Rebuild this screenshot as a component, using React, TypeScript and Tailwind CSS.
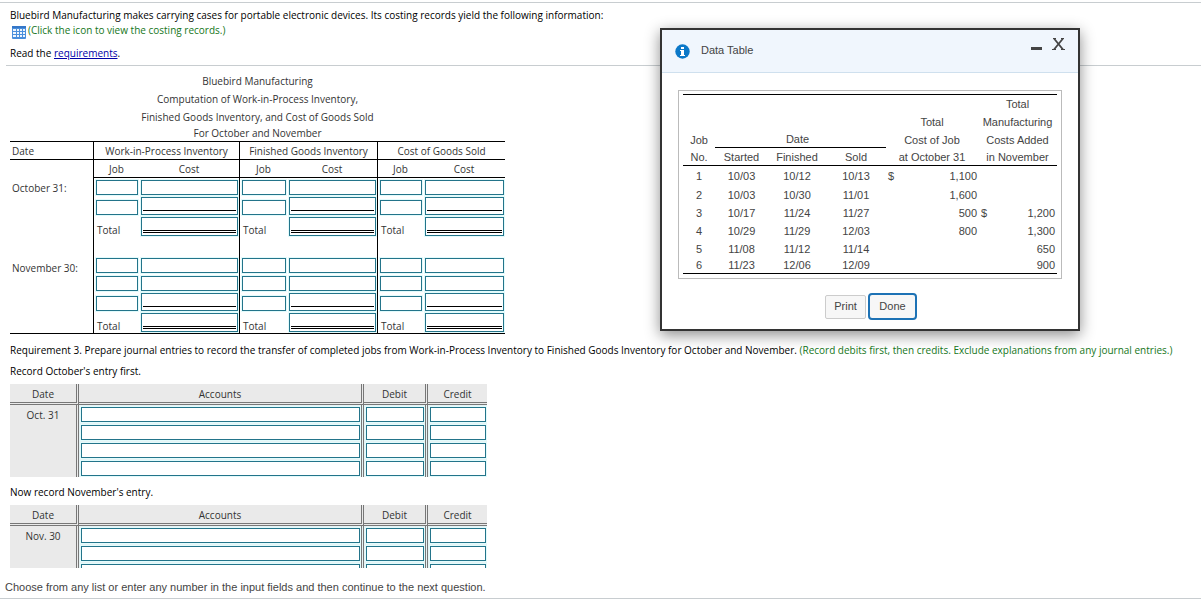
import React from "react";

const GROUPS = ["Work-in-Process Inventory", "Finished Goods Inventory", "Cost of Goods Sold"];

const JOBS = [
  ["1", "10/03", "10/12", "10/13", "$", "1,100", "", ""],
  ["2", "10/03", "10/30", "11/01", "", "1,600", "", ""],
  ["3", "10/17", "11/24", "11/27", "", "500", "$", "1,200"],
  ["4", "10/29", "11/29", "12/03", "", "800", "", "1,300"],
  ["5", "11/08", "11/12", "11/14", "", "", "", "650"],
  ["6", "11/23", "12/06", "12/09", "", "", "", "900"],
];

type Rule = "none" | "single" | "double";

const FIELD: Record<Rule, string> = {
  none: "h-[15px]",
  single: "h-[18px] pb-[3px] px-px",
  double: "h-[19px] pb-[2px] px-px",
};

const FIELD_RULE: Record<Rule, string> = {
  none: "",
  single: "border-b border-black",
  double: "border-b-3 border-double border-black",
};

function Field({ label, rule = "none" }: { label: string; rule?: Rule }) {
  return (
    <div className={`flex border border-[#23748a] bg-white shadow-[0_0_0_1px_#e2fbfc] ${FIELD[rule]}`}>
      <input aria-label={label} className={`w-full min-w-0 bg-transparent outline-none ${FIELD_RULE[rule]}`} />
    </div>
  );
}

function EntryRow({
  period,
  label,
  line,
  rule = "none",
  total = false,
  height,
  top = "pt-px",
  border = "",
}: {
  period: string;
  label?: string;
  line: number;
  rule?: Rule;
  total?: boolean;
  height: string;
  top?: string;
  border?: string;
}) {
  return (
    <tr className={height}>
      <td className={`p-0 pl-[2px] align-top ${label ? "pt-[4px]" : ""}`}>
        {label && <div className="h-[13px]">{label}</div>}
      </td>
      {GROUPS.map((group) => (
        <React.Fragment key={group}>
          <td className={`border-l border-black p-0 pr-px pl-[2px] ${border} ${total || rule === "single" ? "align-bottom pb-px" : `align-top ${top}`}`}>
            {total ? <span className="block pl-px leading-3">Total</span> : <Field label={`${period} ${group} job ${line}`} />}
          </td>
          <td className={`p-0 pr-px pl-[2px] align-top ${border} ${top}`}>
            <Field label={`${period} ${group} cost ${total ? "total" : line}`} rule={rule} />
          </td>
        </React.Fragment>
      ))}
    </tr>
  );
}

function ComputationTable() {
  return (
    <table className="w-[495px] table-fixed border-separate border-spacing-0 border-b border-black leading-[15px] text-[#333]">
      <caption className="pt-[6px] text-center leading-[18px]">
        <div>Bluebird Manufacturing</div>
        <div>Computation of Work-in-Process Inventory,</div>
        <div>Finished Goods Inventory, and Cost of Goods Sold</div>
        <div className="leading-[15px]">For October and November</div>
      </caption>
      <colgroup>
        <col className="w-[83px]" />
        <col className="w-[46px]" />
        <col className="w-[100px]" />
        <col className="w-[48px]" />
        <col className="w-[90px]" />
        <col className="w-[46px]" />
        <col className="w-[82px]" />
      </colgroup>
      <thead>
        <tr className="h-[18px]">
          <th className="border-t border-black p-0 pt-[2px] pl-[2px] text-left font-normal">Date</th>
          {GROUPS.map((group) => (
            <th key={group} colSpan={2} className="border-t border-l border-black p-0 pt-[2px] font-normal">
              {group}
            </th>
          ))}
        </tr>
        <tr className="h-[18px]">
          <td className="border-t border-black p-0"></td>
          {GROUPS.map((group) => (
            <React.Fragment key={group}>
              <th className="border-t border-l border-black p-0 pt-[2px] font-normal">Job</th>
              <th className="border-t border-black p-0 pt-[2px] font-normal">Cost</th>
            </React.Fragment>
          ))}
        </tr>
      </thead>
      <tbody>
        <EntryRow period="October" label="October 31:" line={1} height="h-[19px]" top="pt-[2px]" border="border-t border-black" />
        <EntryRow period="October" line={2} rule="single" height="h-[20px]" />
        <EntryRow period="October" line={3} rule="double" total height="h-[21px]" />
        <tr className="h-[20px]">
          <td className="p-0"></td>
          {GROUPS.map((group) => (
            <td key={group} colSpan={2} className="border-l border-black p-0"></td>
          ))}
        </tr>
        <EntryRow period="November" label="November 30:" line={1} height="h-[18px]" />
        <EntryRow period="November" line={2} height="h-[17px]" />
        <EntryRow period="November" line={3} rule="single" height="h-[20px]" />
        <EntryRow period="November" line={4} rule="double" total height="h-[21px]" />
      </tbody>
    </table>
  );
}

function JournalTable({ date, rows }: { date: string; rows: number }) {
  const columns = ["Accounts", "Debit", "Credit"];
  return (
    <table className="w-[477px] table-fixed border-separate border-spacing-0 leading-[15px] text-[#333]">
      <colgroup>
        <col className="w-[69px]" />
        <col className="w-[285px]" />
        <col className="w-[64px]" />
        <col className="w-[59px]" />
      </colgroup>
      <thead>
        <tr className="h-[21px] bg-[#eaeaea]">
          <th className="border-r-3 border-b-3 border-double border-[#777] p-0 pt-[2px] font-normal">Date</th>
          <th className="border-r-3 border-b-3 border-double border-[#777] p-0 pt-[2px] font-normal">Accounts</th>
          <th className="border-r-3 border-b-3 border-double border-[#777] p-0 pt-[2px] font-normal">Debit</th>
          <th className="border-b-3 border-double border-[#777] p-0 pt-[2px] font-normal">Credit</th>
        </tr>
      </thead>
      <tbody>
        {Array.from({ length: rows }, (_, row) => (
          <tr key={row} className="h-[18px]">
            {row === 0 && (
              <th rowSpan={rows} className="border-r-3 border-double border-[#777] bg-[#eaeaea] p-0 pt-[3px] align-top font-normal">
                {date}
              </th>
            )}
            {columns.map((column) => (
              <td
                key={column}
                className={`bg-[#e6f3f5] p-0 pt-[2px] pr-px pb-px pl-[2px] ${column === "Credit" ? "" : "border-r-3 border-double border-[#777]"}`}
              >
                <Field label={`${date} ${column} line ${row + 1}`} />
              </td>
            ))}
          </tr>
        ))}
      </tbody>
    </table>
  );
}

function HeadLines({ lines }: { lines: string[] }) {
  return (
    <>
      {lines.map((line, i) => (
        <div key={line} className={i === lines.length - 1 ? "leading-4" : "leading-[18px]"}>
          {line}
        </div>
      ))}
    </>
  );
}

function DataDialog() {
  return (
    <div
      role="dialog"
      aria-labelledby="dialog-title"
      className="absolute top-[28px] left-[660px] w-[420px] border-2 border-[#333] bg-white font-['Liberation_Sans',Arial,sans-serif] text-[11px] text-[#444] shadow-[0_4px_14px_rgba(0,0,0,0.45)]"
    >
      <header className="flex h-[43px] items-start border-b border-[#cfe0ee] bg-[#f0f6fd] pr-[13px] pl-[13px]">
        <svg className="mt-[14px] size-[15px]" viewBox="0 0 15 15" aria-hidden="true">
          <circle cx="7.5" cy="7.5" r="7.2" fill="#0b78c8" />
          <path d="M6 3h3v2H6zM5 6h4v5h1v1H5v-1h1V7H5z" fill="#fff" />
        </svg>
        <h2 id="dialog-title" className="mt-[12px] ml-[11px] grow leading-4">
          Data Table
        </h2>
        <button type="button" aria-label="Minimize" className="mt-[17px] h-[3px] w-[11px] bg-[#444]"></button>
        <button type="button" aria-label="Close" className="mt-[7px] ml-[10px]">
          <svg width="13" height="13" viewBox="0 0 13 13" aria-hidden="true" fill="none" stroke="#444">
            <path d="M2 1.5l9 11M11 1.5l-9 11" strokeWidth="1.8" />
            <path d="M1 1.5h3M9 1.5h3M0 12.5h4M9 12.5h4" />
          </svg>
        </button>
      </header>
      <div className="mx-4 mt-[17px] border border-[#bbb] px-1 pt-[3px] pb-1">
        <table className="w-full table-fixed border-separate border-spacing-0 border-y border-black text-center">
          <colgroup>
            <col className="w-[32px]" />
            <col className="w-[53px]" />
            <col className="w-[58px]" />
            <col className="w-[60px]" />
            <col className="w-[92px]" />
            <col className="w-[79px]" />
          </colgroup>
          <thead>
            <tr className="h-[53px]">
              <th rowSpan={2} className="border-b border-black p-0 align-bottom font-normal">
                <HeadLines lines={["Job", "No."]} />
              </th>
              <th colSpan={3} className="border-b border-black p-0 pr-[6px] align-bottom leading-[15px] font-normal">Date</th>
              <th rowSpan={2} className="border-b border-black p-0 align-bottom font-normal">
                <HeadLines lines={["Total", "Cost of Job", "at October 31"]} />
              </th>
              <th rowSpan={2} className="border-b border-black p-0 align-bottom font-normal">
                <HeadLines lines={["Total", "Manufacturing", "Costs Added", "in November"]} />
              </th>
            </tr>
            <tr className="h-[18px] align-bottom leading-4">
              <th className="border-b border-black p-0 font-normal">Started</th>
              <th className="border-b border-black p-0 font-normal">Finished</th>
              <th className="border-b border-black p-0 font-normal">Sold</th>
            </tr>
          </thead>
          <tbody>
            {JOBS.map((job, i) => (
              <tr key={job[0]} className={i === 0 ? "h-[20px]" : i === 5 ? "h-[15px]" : "h-[18px]"}>
                {job.slice(0, 4).map((value, col) => (
                  <td key={col} className="p-0">{value}</td>
                ))}
                <td className="p-0 pr-px pl-[2px]">
                  <div className="flex justify-between"><span>{job[4]}</span><span>{job[5]}</span></div>
                </td>
                <td className="p-0 pr-[2px] pl-[3px]">
                  <div className="flex justify-between"><span>{job[6]}</span><span>{job[7]}</span></div>
                </td>
              </tr>
            ))}
          </tbody>
        </table>
      </div>
      <footer className="flex items-center justify-center gap-[2px] pt-[14px] pb-[9px] pl-[2px]">
        <button type="button" className="h-[24px] w-[41px] rounded-xs border border-[#ccc] bg-[#f7f7f7]">Print</button>
        <button type="button" className="h-[27px] w-[49px] rounded-sm border-2 border-[#1d72b5] bg-[#f7f7f7]">Done</button>
      </footer>
    </div>
  );
}

function CalendarGrid() {
  return (
    <svg className="mt-[3px] h-[13px] w-[14px] shrink-0" viewBox="0 0 14 13" aria-hidden="true">
      <rect width="14" height="13" rx="1" fill="#4a8fdc" />
      <rect width="14" height="2" fill="#3577c8" />
      <g fill="#eef5fd">
        <path d="M1 3h3v2H1zM5 3h2v2H5zM8 3h2v2H8zM11 3h2v2h-2z" />
        <path d="M1 6h3v2H1zM5 6h2v2H5zM8 6h2v2H8zM11 6h2v2h-2z" />
        <path d="M1 9h3v2H1zM5 9h2v2H5zM8 9h2v2H8zM11 9h2v2h-2z" />
      </g>
    </svg>
  );
}

export default function App() {
  return (
    <div className="relative overflow-x-clip bg-white pt-[2px] font-['Open_Sans',Arial,sans-serif] text-[10px] leading-[15px] whitespace-nowrap text-black">
      <hr className="border-[#c8cdd0]" />
      <section className="ml-[6px] border-b border-[#c8cdd0] pt-[5px] pb-1 pl-1">
        <p>Bluebird Manufacturing makes carrying cases for portable electronic devices. Its costing records yield the following information:</p>
        <div className="flex h-[15px] gap-[2px] pl-[2px] text-[#15761a]">
          <CalendarGrid />
          <p>(Click the icon to view the costing records.)</p>
        </div>
        <p className="mt-2">
          Read the <a href="#requirements" className="text-[#0000a8] underline">requirements</a>.
        </p>
      </section>
      <main className="pl-[10px]">
        <ComputationTable />
        <p className="mt-[9px]">
          Requirement 3. Prepare journal entries to record the transfer of completed jobs from Work-in-Process Inventory to Finished Goods Inventory for October and November.{" "}
          <span className="text-[#15761a]">(Record debits first, then credits. Exclude explanations from any journal entries.)</span>
        </p>
        <p className="mt-[6px] mb-[5px]">Record October's entry first.</p>
        <JournalTable date="Oct. 31" rows={4} />
        <p className="mt-2 mb-[5px]">Now record November's entry.</p>
        <div className="h-[63px] overflow-hidden">
          <JournalTable date="Nov. 30" rows={4} />
        </div>
      </main>
      <footer className="mt-3 border-b border-[#c8cdd0] pb-[3px] pl-[5px] font-['Liberation_Sans',Arial,sans-serif] text-[11px] text-[#444]">
        Choose from any list or enter any number in the input fields and then continue to the next question.
      </footer>
      <DataDialog />
    </div>
  );
}
